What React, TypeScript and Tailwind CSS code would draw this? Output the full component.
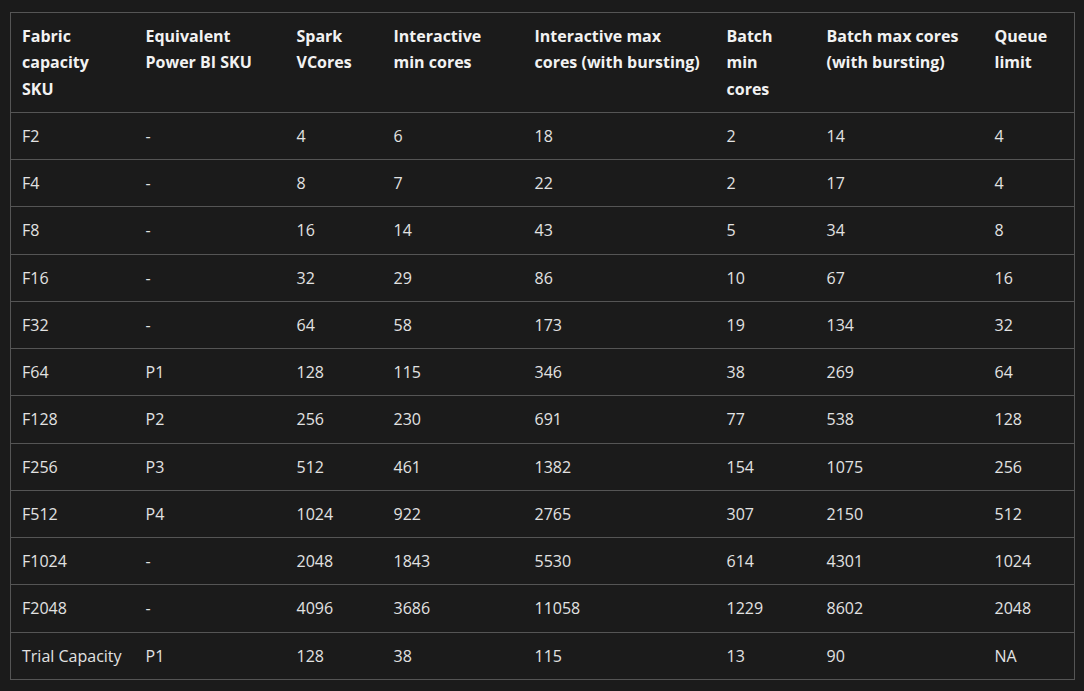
const headers: string[][] = [
  ['Fabric', 'capacity', 'SKU'],
  ['Equivalent', 'Power BI SKU'],
  ['Spark', 'VCores'],
  ['Interactive', 'min cores'],
  ['Interactive max', 'cores (with bursting)'],
  ['Batch', 'min', 'cores'],
  ['Batch max cores', '(with bursting)'],
  ['Queue', 'limit'],
];

const widths = ['w-[124px]', 'w-[151px]', 'w-[97px]', 'w-[141px]', 'w-[192px]', 'w-[100px]', 'w-[168px]', 'w-[91px]'];

const rows: string[][] = [
  ['F2', '-', '4', '6', '18', '2', '14', '4'],
  ['F4', '-', '8', '7', '22', '2', '17', '4'],
  ['F8', '-', '16', '14', '43', '5', '34', '8'],
  ['F16', '-', '32', '29', '86', '10', '67', '16'],
  ['F32', '-', '64', '58', '173', '19', '134', '32'],
  ['F64', 'P1', '128', '115', '346', '38', '269', '64'],
  ['F128', 'P2', '256', '230', '691', '77', '538', '128'],
  ['F256', 'P3', '512', '461', '1382', '154', '1075', '256'],
  ['F512', 'P4', '1024', '922', '2765', '307', '2150', '512'],
  ['F1024', '-', '2048', '1843', '5530', '614', '4301', '1024'],
  ['F2048', '-', '4096', '3686', '11058', '1229', '8602', '2048'],
  ['Trial Capacity', 'P1', '128', '38', '115', '13', '90', 'NA'],
];

export default function App() {
  return (
    <div
      className="min-h-screen bg-[#1b1b1b] px-[10px] pt-[12px]"
      style={{ fontFamily: '"Segoe UI", "Open Sans", sans-serif' }}
    >
      <table className="table-fixed border-collapse border border-[#555555] text-[16px] leading-[26.25px] w-[1064px]">
        <thead>
          <tr className="border-b border-[#555555]">
            {headers.map((h, i) => (
              <th key={i} className={`${widths[i]} px-[11px] py-[10px] text-left align-top font-bold text-[#f2f2f2] whitespace-nowrap`}>
                {h.map((line, j) => (
                  <div key={j}>{line}</div>
                ))}
              </th>
            ))}
          </tr>
        </thead>
        <tbody>
          {rows.map((r, i) => (
            <tr key={i} className="border-b border-[#555555]">
              {r.map((c, j) => (
                <td key={j} className="px-[11px] py-[10px] text-left text-[#e2e2e2] whitespace-nowrap">
                  {c}
                </td>
              ))}
            </tr>
          ))}
        </tbody>
      </table>
    </div>
  );
}
